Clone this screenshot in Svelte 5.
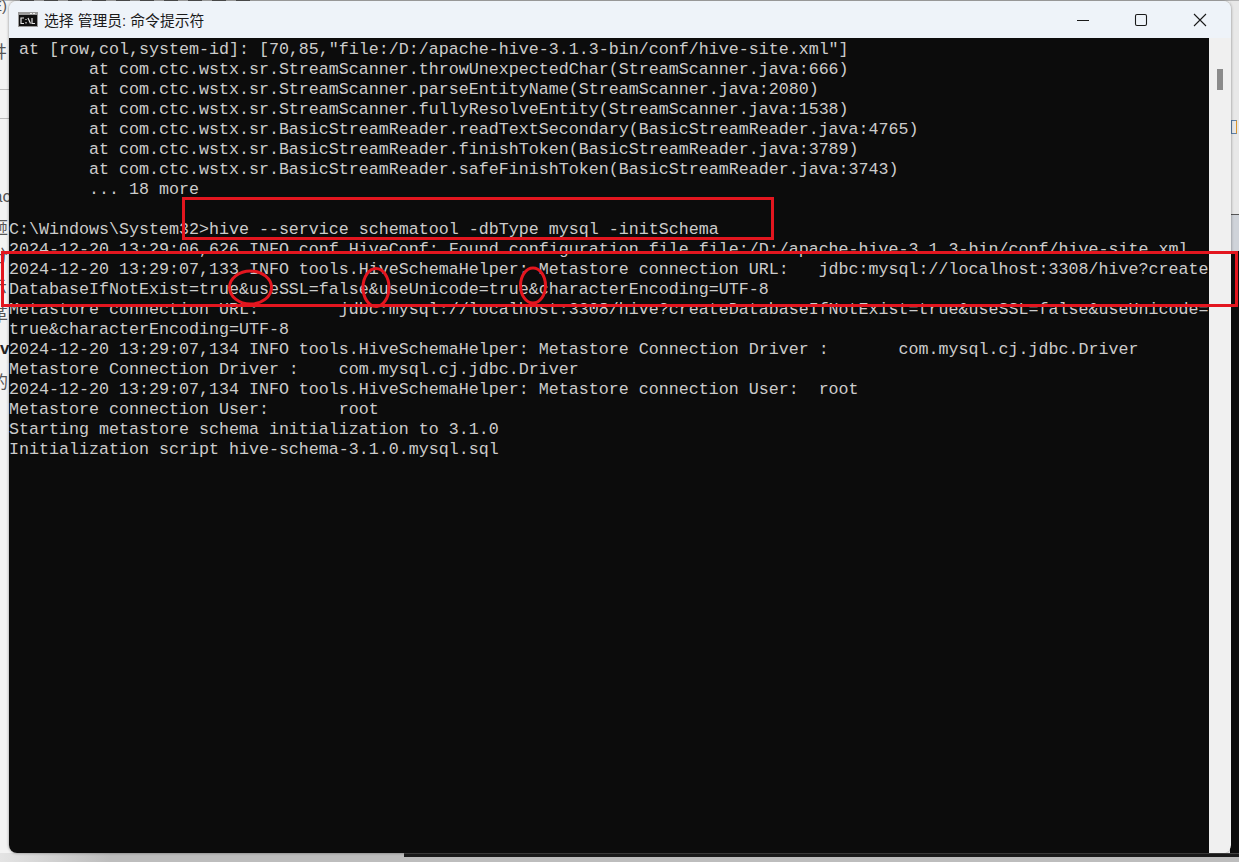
<script>
  const lines = [
    ' at [row,col,system-id]: [70,85,"file:/D:/apache-hive-3.1.3-bin/conf/hive-site.xml"]',
    '        at com.ctc.wstx.sr.StreamScanner.throwUnexpectedChar(StreamScanner.java:666)',
    '        at com.ctc.wstx.sr.StreamScanner.parseEntityName(StreamScanner.java:2080)',
    '        at com.ctc.wstx.sr.StreamScanner.fullyResolveEntity(StreamScanner.java:1538)',
    '        at com.ctc.wstx.sr.BasicStreamReader.readTextSecondary(BasicStreamReader.java:4765)',
    '        at com.ctc.wstx.sr.BasicStreamReader.finishToken(BasicStreamReader.java:3789)',
    '        at com.ctc.wstx.sr.BasicStreamReader.safeFinishToken(BasicStreamReader.java:3743)',
    '        ... 18 more',
    ' ',
    'C:\\Windows\\System32>hive --service schematool -dbType mysql -initSchema',
    '2024-12-20 13:29:06,626 INFO conf.HiveConf: Found configuration file file:/D:/apache-hive-3.1.3-bin/conf/hive-site.xml',
    '2024-12-20 13:29:07,133 INFO tools.HiveSchemaHelper: Metastore connection URL:   jdbc:mysql://localhost:3308/hive?create',
    'DatabaseIfNotExist=true&useSSL=false&useUnicode=true&characterEncoding=UTF-8',
    'Metastore connection URL:        jdbc:mysql://localhost:3308/hive?createDatabaseIfNotExist=true&useSSL=false&useUnicode=',
    'true&characterEncoding=UTF-8',
    '2024-12-20 13:29:07,134 INFO tools.HiveSchemaHelper: Metastore Connection Driver :       com.mysql.cj.jdbc.Driver',
    'Metastore Connection Driver :    com.mysql.cj.jdbc.Driver',
    '2024-12-20 13:29:07,134 INFO tools.HiveSchemaHelper: Metastore connection User:  root',
    'Metastore connection User:       root',
    'Starting metastore schema initialization to 3.1.0',
    'Initialization script hive-schema-3.1.0.mysql.sql'
  ];
</script>

<div class="desktop">
  <div class="backdrop-top"></div>
  <div class="backdrop-bottom"><div class="taskbar"></div></div>

  <div class="side">
    <span class="frag f1">E)</span>
    <span class="frag f2">井</span>
    <span class="frag f3">ac</span>
    <span class="frag f4">砸</span>
    <span class="frag f5">分</span>
    <span class="frag f6">示</span>
    <span class="frag f7">革</span>
    <span class="frag f8">v</span>
    <span class="frag f9">的</span>
    <i class="rule r1"></i>
    <i class="rule r2"></i>
  </div>

  <div class="rightstrip">
    <div class="strip-a"><i class="mini"></i></div>
    <div class="strip-b"></div>
    <div class="strip-c"></div>
  </div>

  <div class="window">
    <header class="titlebar">
      <div class="title">
        <svg class="appicon" width="20" height="15" viewBox="0 0 20 15">
          <rect x="0" y="0" width="20" height="15" fill="#9a9a9a"/>
          <rect x="1" y="3" width="18" height="11" fill="#111"/>
          <rect x="12" y="1" width="2" height="1" fill="#efefef"/>
          <rect x="15" y="1" width="2" height="1" fill="#efefef"/>
          <path d="M6 6H3V11.5H6M8 7V8M8 10V11.5M10 6L12.5 11.5M14 6V11.5H17" fill="none" stroke="#e4e4e4" stroke-width="1.2"/>
        </svg>
        <span>选择 管理员: 命令提示符</span>
      </div>
      <div class="controls">
        <svg width="14" height="14" viewBox="0 0 14 14"><path d="M1 7.5H13" stroke="#1a1a1a" stroke-width="1.1"/></svg>
        <svg width="14" height="14" viewBox="0 0 14 14"><rect x="1.5" y="1.5" width="11" height="11" rx="1.5" fill="none" stroke="#1a1a1a" stroke-width="1.1"/></svg>
        <svg width="14" height="14" viewBox="0 0 14 14"><path d="M1 1L13 13M13 1L1 13" stroke="#1a1a1a" stroke-width="1.1"/></svg>
      </div>
    </header>
    <div class="content">
      <div class="console">
        {#each lines as line}
          <div class="line">{line}</div>
        {/each}
      </div>
      <div class="scrollbar"><div class="thumb"></div></div>
    </div>
  </div>

  <svg class="marks" width="1239" height="862" viewBox="0 0 1239 862">
    <g fill="none" stroke="#e3161f" stroke-width="3">
      <rect x="183.5" y="198.5" width="589" height="40"/>
      <rect x="2.5" y="252.5" width="1234" height="53"/>
      <ellipse cx="250.5" cy="287.5" rx="21" ry="16.5"/>
      <ellipse cx="376" cy="287.5" rx="13" ry="19"/>
      <ellipse cx="533" cy="285.5" rx="12.5" ry="17.5"/>
    </g>
  </svg>
</div>

<style>
  :global(body) {
    margin: 0;
    background: #fff;
    overflow: hidden;
  }
  .desktop {
    position: relative;
    width: 1239px;
    height: 862px;
    overflow: hidden;
    background: #f3f3f3;
    font-family: "Liberation Sans", "Noto Sans CJK SC", sans-serif;
  }
  .backdrop-top {
    position: absolute;
    top: 0;
    left: 0;
    right: 0;
    height: 1px;
    background:
      repeating-linear-gradient(90deg, #555 0 14px, #b4b4b4 14px 24px) 20px 0 / 230px 1px no-repeat,
      #b4b4b4;
  }
  .backdrop-bottom {
    position: absolute;
    left: 0;
    right: 0;
    bottom: 0;
    height: 9px;
    background: linear-gradient(90deg, #e4e4e4 0, #bdbdbd 110px);
  }
  .taskbar {
    margin-left: 404px;
    height: 4px;
    box-sizing: border-box;
    border-top: 1px solid #444;
    background: #1a1a1a;
  }
  .side {
    position: absolute;
    inset: 0 auto 0 0;
    width: 9px;
    overflow: hidden;
    color: #555;
    font-size: 17px;
  }
  .frag {
    position: absolute;
    line-height: 18px;
    white-space: nowrap;
  }
  .f1 { top: -3px; left: -8px; font-size: 15px; }
  .f2 { top: 44px; left: -10px; }
  .f3 { top: 188px; left: -7px; }
  .f4 { top: 220px; left: -9px; }
  .f5 { top: 248px; left: -9px; }
  .f6 { top: 279px; left: -10px; }
  .f7 { top: 307px; left: -9px; }
  .f8 { top: 340px; left: 0; font-weight: bold; color: #222; }
  .f9 { top: 374px; left: -9px; }
  .rule {
    position: absolute;
    left: 0;
    width: 9px;
    height: 1px;
    background: #bbb;
  }
  .r1 { top: 89px; }
  .r2 { top: 118px; }
  .rightstrip {
    position: absolute;
    top: 1px;
    bottom: 9px;
    left: 1230px;
    right: 0;
    display: flex;
    flex-direction: column;
  }
  .strip-a {
    flex: 0 0 213px;
    background: #e8e8e8;
    border-bottom: 1px solid #555;
    position: relative;
  }
  .mini {
    position: absolute;
    left: 1px;
    top: 119px;
    width: 4px;
    height: 12px;
    border: 1px solid #5b7fa8;
    border-right-color: #d9962f;
  }
  .strip-b {
    flex: 0 0 36px;
    background: #cfd3d9;
  }
  .strip-c {
    flex: 1;
    background: #0c0c0c;
  }
  .window {
    position: absolute;
    left: 9px;
    top: 1px;
    width: 1222px;
    height: 852px;
    border-radius: 8px;
    overflow: hidden;
    display: flex;
    flex-direction: column;
    box-shadow: 0 0 3px rgba(0, 0, 0, 0.45);
  }
  .titlebar {
    flex: 0 0 37px;
    background: #eef3f9;
    display: flex;
    align-items: center;
    justify-content: space-between;
    box-sizing: border-box;
    padding: 0 24px 0 9px;
  }
  .title {
    display: flex;
    align-items: center;
    gap: 6px;
    font-size: 14.8px;
    color: #1a1a1a;
  }
  .controls {
    display: flex;
    gap: 44px;
  }
  .controls svg:last-child {
    margin-left: 1px;
  }
  .content {
    flex: 1;
    display: flex;
    min-height: 0;
  }
  .console {
    flex: 1;
    background: #0c0c0c;
    color: #cccccc;
    font-family: "Liberation Mono", "DejaVu Sans Mono", monospace;
    font-size: 16.67px;
    line-height: 20px;
    padding-top: 2px;
    min-width: 0;
    overflow: hidden;
  }
  .line {
    white-space: pre;
    height: 20px;
  }
  .scrollbar {
    flex: 0 0 22px;
    background: #f0f0f0;
    position: relative;
  }
  .thumb {
    position: absolute;
    left: 8px;
    top: 31px;
    width: 6px;
    height: 21px;
    background: #8b8b8b;
  }
  .marks {
    position: absolute;
    inset: 0;
    z-index: 2;
  }
</style>
